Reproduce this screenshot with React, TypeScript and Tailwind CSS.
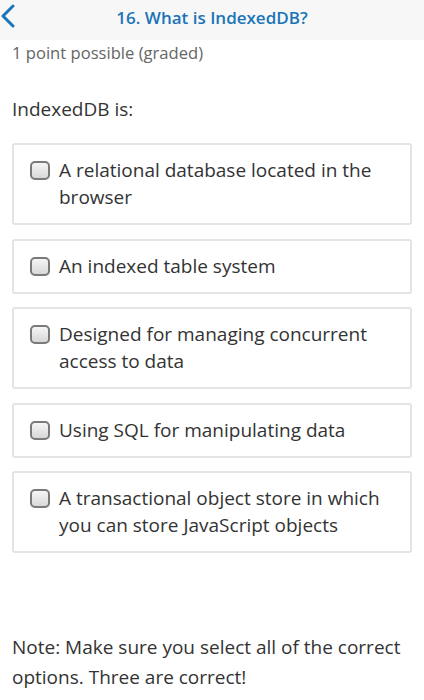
const options = [
  'A relational database located in the browser',
  'An indexed table system',
  'Designed for managing concurrent access to data',
  'Using SQL for manipulating data',
  'A transactional object store in which you can store JavaScript objects',
];

const Checkbox = () => (
  <span className="mt-[4px] h-[19px] w-[20px] shrink-0 rounded-[5px] border-2 border-[#7a7a7a] bg-gradient-to-b from-[#f6f6f6] to-[#d8d8d8]" />
);

export default function App() {
  return (
    <div className="min-h-[700px] bg-white font-['Open_Sans',sans-serif]">
      <header className="relative flex h-[40px] items-center justify-center bg-[#f7f7f7]">
        <svg className="absolute left-0 top-[4px]" width="16" height="24" viewBox="0 0 16 24">
          <path d="M13 2 L3 12 L13 22" fill="none" stroke="#1a74b8" strokeWidth="3" strokeLinecap="round" strokeLinejoin="round" />
        </svg>
        <h1 className="-mt-[4px] text-[17px] font-semibold text-[#1a74b8]">16. What is IndexedDB?</h1>
      </header>

      <div className="px-3">
        <p className="mt-[1px] text-[16.6px] leading-[24px] text-[#666]">1 point possible (graded)</p>
        <p className="mt-[31px] text-[19px] leading-[26px] text-[#333]">IndexedDB is:</p>

        <div className="mt-[21px] flex flex-col gap-[13.5px]">
          {options.map((o) => (
            <label
              key={o}
              className="flex gap-[9px] rounded-[3px] border-2 border-[#e4e4e4] py-[12px] pl-[16px] pr-[20px]"
            >
              <Checkbox />
              <span className="text-[19px] leading-[27px] text-[#333]">{o}</span>
            </label>
          ))}
        </div>

        <p className="mt-[79px] text-[19px] leading-[30px] text-[#333]">
          Note: Make sure you select all of the correct options. Three are correct!
        </p>
      </div>
    </div>
  );
}
